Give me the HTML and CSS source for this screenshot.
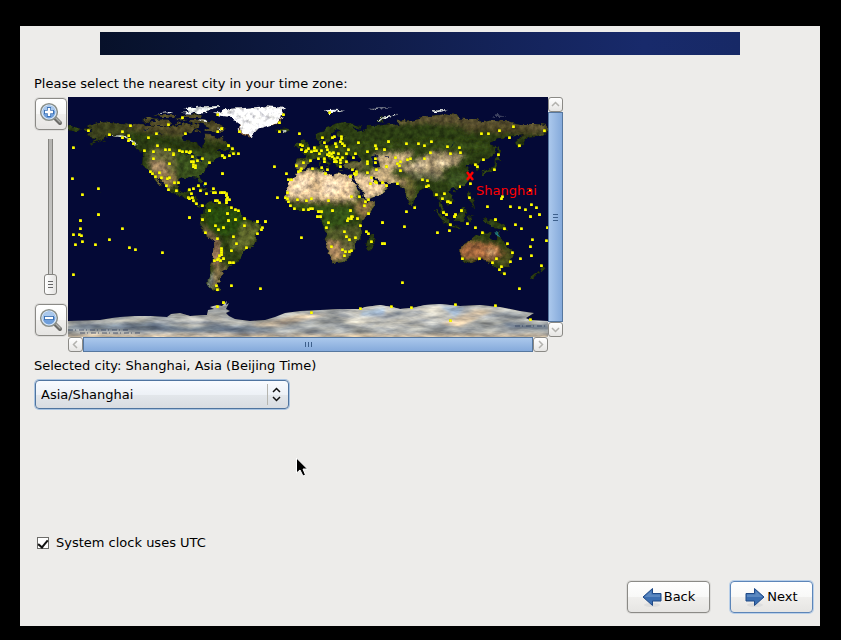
FILE: index.html
```html
<!DOCTYPE html>
<html lang="en">
<head>
<meta charset="utf-8">
<title>Time zone selection</title>
<link rel="stylesheet" href="styles.css">
</head>
<body>
<form class="installer">
  <div class="banner"></div>
  <main class="content">
    <h1 class="prompt">Please select the nearest city in your time zone:</h1>
    <div class="picker">
      <div class="zoom">
        <button type="button" class="button zoom-button" aria-label="Zoom in">
          <svg viewBox="0 0 24 24" width="24" height="24">
            <path d="M15 15l6 6" stroke="#6b6b68" stroke-width="4" stroke-linecap="round"/>
            <path d="M16 15l5 5" stroke="#aeb0ac" stroke-width="1.5" stroke-linecap="round"/>
            <circle cx="10" cy="10" r="8.3" fill="#6f9fdb" stroke="#8c9089" stroke-width="1.6"/>
            <circle cx="10" cy="10" r="7" fill="none" stroke="#dce8f4" stroke-width="1.2"/>
            <path d="M4 9a6 5.500 0 0 1 12 0q-6-1-12 3z" fill="#a9c8ec"/>
            <path d="M10 5v10M5 10h10" stroke="#3c72b5" stroke-width="4"/>
            <path d="M10 6v8M6 10h8" stroke="#fff" stroke-width="2.400"/>
          </svg>
        </button>
        <input class="zoom-slider" type="range" min="0" max="100" value="0" aria-label="Zoom level">
        <button type="button" class="button zoom-button" aria-label="Zoom out">
          <svg viewBox="0 0 24 24" width="24" height="24">
            <path d="M15 15l6 6" stroke="#6b6b68" stroke-width="4" stroke-linecap="round"/>
            <path d="M16 15l5 5" stroke="#aeb0ac" stroke-width="1.5" stroke-linecap="round"/>
            <circle cx="10" cy="10" r="8.300" fill="#6f9fdb" stroke="#8c9089" stroke-width="1.6"/>
            <circle cx="10" cy="10" r="7" fill="none" stroke="#dce8f4" stroke-width="1.2"/>
            <path d="M4 9a6 5.500 0 0 1 12 0q-6-1-12 3z" fill="#a9c8ec"/>
            <path d="M5 10h10" stroke="#3c72b5" stroke-width="4"/>
            <path d="M6 10h8" stroke="#fff" stroke-width="2.200"/>
          </svg>
        </button>
      </div>

      <svg class="map" viewBox="68 97 480 240" role="img" aria-label="World map with Shanghai selected">
        <defs>
          <!-- Coastlines as longitude / latitude pairs -->
          <clipPath id="land">
            <path d="M-168 66L-164 66.500-162 66-166 68.300-163 69.500-156 71.300-150 70.500-141 69.700-135 69-128 70-124 69.500-115 68.500-108 68-101 67.800-96 68-94 71.500-92 69.500-88 68.500-85 69.500-81.500 69-82 67-87 66-88 64-93 62-94.500 60-94.500 58.800-92.500 57-88 56.500-82.500 55.200-82 53-80 51.300-79 52-79 54.500-76.500 56.500-78.500 59-77.500 62.400-74 62.300-70 61-69.500 59-67 58.500-65 60.200-62 57-60 55-57 53.500-56 52-60 50.200-66 50.200-70 47.500-65 49-64.500 47-60 45.800-65.500 43.500-67 45-70 43.800-70.500 42-74 40.700-75.500 38.500-76 36-77 34.500-81 32-81.300 30-80 27-80.500 25.200-82 27-83 29.500-85 29.800-89 30.200-91 29.200-94 29.500-97 28-97.500 25-97.700 22-96 19-94.500 18.200-92 18.700-90.500 20-90 21.200-87 21.500-88 18-88.500 16-84 15.800-83.300 14-83.800 11-81.500 9-79.500 9.500-77.200 8.500-78 7.300-80.300 7.500-83 8.300-85.800 10.200-87.500 13-92 14.500-94.500 16.200-97 15.800-102 18-105.500 20-105.500 22.500-109 26-112.500 29.500-114.700 31.700-113 28.500-110 24-110 23-112 25-115 28-117 32.500-120.500 34.500-122.500 37.500-124.300 40.300-124 44-124.500 48.300-123 49-128 51-130.500 54.500-134 58-139 59.700-145 60.300-148 60.500-152 59.200-151 61-154 59-158 56.500-162 55-164 54.700-161 56-157.500 58.700-162 58.800-162 60-165.500 61.500-164.500 63-161 64.300-166 64.600Z"/>
            <path d="M-77.500 8.500L-75 11-72 12-71.500 10.500-68 11.500-62 10.700-60 8.500-55 6-51 4.500-50 1-48-1-44-2.500-39-3.500-35.300-5.500-35-9-38.500-13-39.300-18-41-22-45-23.300-48.500-26-49-28.500-52-33-55-34.900-58-34-57-36.500-62-39-65-41-63.700-42.500-65.500-45-67.500-46.500-66-48-69-51-68.300-52.500-65.300-54.700-69-55.300-73-53.500-75.500-50-75-46.500-73-42-73.500-38-71.500-33-71.500-30-70.300-24-70.300-18.400-76-14-79.500-8-81.200-5.500-80-3-81-1-80 1-77.500 2.700-77.500 6Z"/>
            <path d="M-6 35.800L-2 35.200 3 36.900 10 37.300 11 35 10.200 34 15 32.300 19 30.300 20 32.500 23 32.600 29 31 34 31.200 32.600 29.500 35.500 24 37.300 21 39 16 43 12 44 10.500 51 12 50.500 9 47 4 42-1 39.500-5 40.500-11 40.500-15 35-20 35.500-24 32.800-26 32-29 28-33 25.500-34 20-34.800 18.300-34 17.500-30.500 15-26.500 14.300-22 11.800-17.500 13.700-12 13-8.500 9-1 9.700 3.500 8.500 4.600 6 4.300 4 6.300-2 4.800-7.500 4.300-12 7.300-15 11-17 14.700-16 19-17 21.300-14.500 26-11.500 28.300-9.700 30-9.300 32.500Z"/>
            <path d="M49.300-12L50.300-15.500 47.500-24.500 45-25.500 43.500-22 44.500-16.500Z"/>
            <path d="M-9.300 38.700L-8.800 43.200-1.800 43.400-1.200 46-4.500 48.400-1.500 48.700-1 49.500 2 51 4.500 52.500 8.200 54 8.200 57 10.500 57.600 10 55 14 54 19 54.500 21 56.500 24 57.500 24 59.300 30 60 23 60 21.300 61 21.500 63.500 25.500 65 22 65.800 17.300 62 17 60.500 18.800 60 16.500 57 14.200 55.400 11.200 59 8 58 5.300 59 5 62 10 64 14 67.500 20 70 26 71 31 70.300 41 67.700 40 66.300 33 66.700 37 64 40 64.600 44 66 44 68.300 54 68.500 60 69.500 68 69 67 72 73 73 73 71 83 73.500 87 75.300 98 76.300 104 77.700 113 76 113 73.700 127 73.300 131 71 140 72.700 150 71.600 160 69.700 170 69.800 180 69 180 65 177 62.500 170 60 163.500 59.500 162 56 158 51.200 156.500 51 155.700 56 160 60.500 163 62.300 156 61.500 150 59.500 143 59.300 135.500 54.700 141 53 140 48 135 43.500 131 43 127.700 39.800 129.400 36 126.500 34.500 125 38 121.500 40.700 121.500 39 118 39 119 37.300 122.300 37 119.500 35 121.800 31.500 121.500 28.500 118 24.500 113.500 22.200 109.500 21.500 106 20 109 14 109 11.500 105 8.700 104.800 10.400 100.800 13.400 99.300 11 100.200 8 103.400 4.200 103.800 1.400 101 3 98.300 8 97.700 16 94.300 16 92 22 87 21.500 82 16.500 80.200 13 79.800 10.300 77.500 8.100 74.800 13 72.800 19.500 72.500 21.500 69 22.300 66.500 25.300 57.500 25.700 54 26.700 50 30 48 30 50 26.700 51.500 25.500 54 24.200 56.300 26 59.800 22.500 55.500 17.300 45 12.700 43 13.300 42.500 17 39 21.500 35 28 34.800 29.500 34.300 31.300 36 36.500 30.500 36.500 27.500 36.800 26.300 39.500 29 41 35 42 41.500 41.500 37 45.200 39.200 47.200 35 46.300 33.500 44.500 31 46.500 28 43.500 28.500 41.300 23.800 40.500 22.800 37 19.500 41 19.500 42 13.700 45.500 12.300 45.200 14 42.500 18.400 40 16.500 39 16 38 12 42 8.700 44.300 4 43.400 3 42-.2 39-2 36.800-5.500 36.100-8.800 37Z"/>
            <path d="M114-22L113.500-25.500 115.700-32 115.200-34.300 118-35 124-33.500 129-31.500 132-32 135.500-34.700 137.800-33 138.200-35.500 140-38 143.500-38.800 146.500-39 150-37.300 151.500-33 153.500-28.500 152.800-25 149-21 146-19 145.400-15 142.500-10.800 141.500-13 141-17.300 139.500-17.500 135.500-15 137-12.200 132.500-11.300 130-13.500 129-15 126-14 122.200-17.500Z"/>
            <!-- Islands -->
            <path d="M-5 50L1 51 1.500 53-2 56-2 57.500-4 58.500-6 57-4.500 54-3 53-5 52ZM-10 52L-6 52.300-6 55-8 55.200-10 54ZM-24 65.500L-22 64-18 63.500-14 65-16 66.500-20 66ZM130 31L132 31 132 33.500 136 33.700 140.500 35.500 142 39.500 141 41.500 145 43 142 45.500 140 43 140 38 136 36.500 131 34.200ZM142 46L144 49 143 54 142.200 53ZM95 5.500L98 4.500 104-1 106-3 105.500-6 102-4 98 1ZM105.500-6.500L108-6.500 114.500-7.500 114-8.500 106-7.500ZM109 1.500L113 3.500 117 7 119 5 117.500 1 116-4 110.500-3ZM119.500-5.500L120.500-3 119.500 0 121 1.200 125 1.500 121 .2 123.500-1 122-2 122.500-5 121-3 120.500-5.500ZM131-1L134-1 135-3.300 138-1.700 144-4 147.500-6.500 150.500-10.300 147-9.500 143-9 138-8 138-5.500 133-4ZM120 18.500L122 18.300 121.500 14.500 124 12.800 126 7 122.500 7.500 124 9 123 11 120.300 14ZM120.500 22L122 25 121 25.200ZM80 6.500L82 7 80.500 9.500ZM172.500-34.500L176-37.500 178.500-38 175-41.500 173.500-39.300 175-37.500ZM173-40.500L174-42 171-44.500 169-46.700 166.500-46 171-42.200ZM144.500-41L148-41 147-43.700ZM-84.500 22L-82 23.200-77 21.200-74.300 20.200-77.500 19.800ZM-74.200 18.500L-73 20-69 19.500-68.500 18.300-71.500 17.800ZM-78.200 18.300L-76.300 17.900ZM-67 18.400L-65.700 18.400-65.700 17.900-67 18ZM-59.300 47.800L-53 46.700-54 49.500-56 51.500ZM-128 50.800L-123.400 48.400-126 49ZM51.500 71.500L57 70.800 56 73 60 75.500 68 76.800 62 76.300 55 75ZM-180 69L-175 67.300-170 66-173 64.300-180 65ZM8.300 39L9.700 39 9.300 43 8.600 42ZM12.500 38L15.500 38.300 15 36.800ZM23.500 35.300H26.200V34.900H23.500ZM32.500 34.700L34.500 35.500 33.500 34.700ZM-156 19L-155 20-156 20ZM110 18.500L111 20 109 20ZM-155 57L-152 57.500-153.500 58Z"/>
            <!-- Canadian Arctic -->
            <path d="M-61.500 66L-67 63-72 64.500-78 64.500-73 67.500-79 70-88 71-89 73.500-80 73.700-72 71.500-66 69ZM-117 69L-105 68.800-102 70-105 73-116 73-113 71.500-118 71ZM-125 72L-119 71.500-115 73.300-120 74.500ZM-110 75L-100 75-98 76.500-108 76.500-116 76.300ZM-95 72.500L-90 73.500-96 74-102 73ZM-87 63.800L-81 63.800-84 66ZM-95 75L-80 75-80 76.500-90 77ZM-99 69.500L-96 70-98 71.500Z"/>
          </clipPath>
          <clipPath id="ice"><path d="M68 321L100 320 112 318 120 317 135 316 150 316 167 317 171 314 180 313 190 316 207 315 208 310 214 309 210 307 217 305 222 306 227 301 226 305 229 303 226 309 230 311 226 313 229 316 235 319 250 321 265 320 275 317 285 313 300 311 320 310 340 309 360 309 365 307 380 305 392 307 400 309 412 308 425 305 440 304 460 306 480 305 500 307 520 311 534 313 526 318 530 320 548 321V340H68Z"/></clipPath>
          <filter id="soft"><feGaussianBlur stdDeviation="1.600"/></filter>
          <filter id="terrain" filterUnits="userSpaceOnUse" x="68" y="97" width="480" height="240" color-interpolation-filters="sRGB">
            <feTurbulence type="fractalNoise" baseFrequency=".18" numOctaves="3" seed="4" result="rough"/>
            <feDisplacementMap in="SourceGraphic" in2="rough" scale="5" xChannelSelector="R" yChannelSelector="G" result="shape"/>
            <feTurbulence type="fractalNoise" baseFrequency=".2" numOctaves="3" seed="9"/>
            <feColorMatrix values="1.300 0 0 0 -.15 1.300 0 0 0 -.15 1.200 .1 0 0 -.15 0 0 0 0 1" result="grain"/>
            <feComposite in="shape" in2="grain" operator="arithmetic" k1=".7" k2=".65"/>
          </filter>
          <filter id="strata" filterUnits="userSpaceOnUse" x="68" y="297" width="480" height="42" color-interpolation-filters="sRGB">
            <feTurbulence type="fractalNoise" baseFrequency=".04 .16" numOctaves="4" seed="7"/>
            <feColorMatrix values="1.600 0 0 0 -.3 1.500 .1 0 0 -.3 1.300 .3 0 0 -.3 0 0 0 0 1" result="layers"/>
            <feComposite in="SourceGraphic" in2="layers" operator="arithmetic" k1=".6" k2=".7"/>
          </filter>
          <marker id="city" viewBox="0 0 8 8" markerWidth="8" markerHeight="8" markerUnits="userSpaceOnUse" refX="4" refY="4"><rect width="8" height="8" fill="#c8c800"/><rect x="1" y="1" width="7" height="7" fill="#ff0"/></marker>
        </defs>
        <rect x="68" y="97" width="480" height="240" fill="#040936"/>

        <g filter="url(#terrain)">
          <g transform="translate(308 217) scale(1.33333 -1.33333)">
            <g clip-path="url(#land)">
              <rect x="-180" y="-60" width="360" height="150" fill="#2b3d13"/>
              <g filter="url(#soft)">
                <path fill="#504a28" d="M-170 62L-140 66-120 63-95 60-78 58-60 56-60 80-170 80Z"/>
                <path fill="#3b3f1e" d="M-168 72L-140 71-128 66-140 60-160 58-170 60Z"/>
                <path fill="#253611" d="M-140 64L-110 59-95 52-65 48-60 55-80 54-97 57-120 62Z"/>
                <path fill="#626336" d="M-115 53L-100 49-98 34-102 28-118 34-120 47Z"/>
                <path fill="#a08460" d="M-119 42L-108 42-104 33-103 24-112 30-118 35Z"/>
                <path fill="#8b744a" d="M-115 32L-112 24-104 21-98 26-101 34Z"/>
                <path fill="#38501a" d="M-97 49L-68 47-76 35-82 25-97 29Z"/>
                <path fill="#284a0d" d="M-78 9L-50 5-48-8-60-14-74-13Z"/>
                <path fill="#5c652b" d="M-50-4L-36-5-40-20-50-28-60-20-52-12Z"/>
                <path fill="#927052" d="M-81-4L-74-11-67-17-65-28-67-38-72-36-72-20Z"/>
                <path fill="#7a6b43" d="M-70-36L-60-37-66-54-74-52Z"/>
                <path fill="#aeb8bb" d="M-73-43L-75-53-73-53-71-45Z"/>
                <path fill="#e4c49a" d="M-18 15L10 13 36 13 35 33-17 35Z"/>
                <path fill="#ffe3be" d="M-10 22L-2 20 2 28-6 29ZM10 18L22 17 27 27 12 28ZM-12 18L-5 18-4 21-14 21Z"/>
                <path fill="#c4a579" d="M2 21L12 20 8 27 3 27ZM-6 33L8 35 5 36-6 35Z"/>
                <path fill="#827244" d="M-18 14L38 12 38 10-16 11Z"/>
                <path fill="#315014" d="M-16 10L35 8 33-5 12-12 8 5Z"/>
                <path fill="#8b7144" d="M36 12L52 12 42-2 36 3Z"/>
                <path fill="#4d5527" d="M12-9L40-6 40-18 34-22 14-18Z"/>
                <path fill="#a8845c" d="M12-18L24-19 28-31 18-34Z"/>
                <path fill="#66643a" d="M27-18L36-22 28-34 24-33Z"/>
                <path fill="#e5c69c" d="M35 33L48 31 60 24 54 16 44 12 36 24Z"/>
                <path fill="#344816" d="M-5 50L20 52 60 56 100 58 134 56 134 50 85 53 45 50 5 44Z"/>
                <path fill="#787044" d="M-9 42L2 41-2 36-9 37ZM26 41L44 41 42 36 27 37Z"/>
                <path fill="#59502e" d="M60 69L95 70 110 68 180 62 180 80 60 80Z"/>
                <path fill="#464020" d="M115 64L175 61 160 68 120 68Z"/>
                <path fill="#c4aa7e" d="M44 35L62 37 67 26 58 24 50 29ZM48 47L80 49 75 42 64 36 55 36Z"/>
                <path fill="#a4916c" d="M66 36L94 49 118 47 112 39 100 36 102 30 82 29 72 34Z"/>
                <path fill="#e2cda6" d="M77 37L88 37 90 41 80 41ZM96 39L106 38 105 42 97 43Z"/>
                <path fill="#6c6a4e" d="M73 35L80 29 102 28 96 34Z"/>
                <path fill="#63602f" d="M70 30L80 29 80 16 76 10 72 20Z"/>
                <path fill="#a68b60" d="M66 30L74 28 72 22 67 25Z"/>
                <path fill="#3c5520" d="M104 32L121 33 118 23 106 21Z"/>
                <path fill="#a0663e" d="M113-23L122-18 132-19 142-21 147-28 140-33 125-32 114-31Z"/>
                <path fill="#d6a874" d="M135-24L141-25 139-29 135-29Z"/>
                <path fill="#46481f" d="M148-20L154-27 150-38 143-38 146-30Z"/>
              </g>
            </g>
            <path fill="#fff" d="M-73 78.300L-65 79-62 81-45 82-32 83-22 82.300-16 81.500-20 80-18 77-20 76-19 74-23 72.500-22 70.500-28 69-35 67-39 65-41 63-42 60-45 60.300-50 62.500-52 66-51 69-54 71-57 75-66 76Z"/>
            <path fill="none" stroke="#68492d" stroke-width="1" d="M-20 76L-22 70.500-28 69M-43 60L-50 62.500-51 69"/>
            <path fill="#eef3f3" d="M-93 81L-80 83-64 83-76 80-74 79-82 77-88 79ZM-115 77L-104 79-101 78ZM-95 78L-85 80-88 77.500ZM12 80L20 80.500 28 80 20 79 16 77ZM45 81L63 81.500 50 80.500ZM92 80L105 80 97 78.500 92 79.500ZM138 75.500L150 75.500 142 76ZM-83 73L-77 73-75 71-80 72ZM-68 67L-63 67-65 65.500Z"/>
            <path fill="none" stroke="#dfe5e6" stroke-width="1" d="M53 72L57 75 67 77M-146 61L-138 60.500-133 58-129 54M-19 64.500H-17"/>
            <path fill="#06103b" d="M49 46L47 44.500 49.500 40.500 49 37.500 54 37 53 41 51 44.500 53 46.500ZM-92 47L-88 48.500-85 46.500-87 42-88 43-86 46ZM-84 46L-80 45-82 43ZM-83 42L-79 43.200-78 44-80 42ZM32 1H34V-2H32ZM29-4L31-8.500 29.500-6ZM104 51.500L109 54 110 56 107 53ZM-124 66L-119 66.500-121 65ZM-116 62L-109 63-112 61.500ZM58 46L61 45 60 44Z"/>
            <path fill="none" stroke="#1c6670" stroke-width="1.500" d="M-78 25L-76 24M141-11L145-15"/>
          </g>
        </g>
        <g filter="url(#strata)">
          <g clip-path="url(#ice)">
            <rect x="68" y="297" width="480" height="42" fill="#a3a6a5"/>
            <g filter="url(#soft)">
              <path fill="#bdbdb8" d="M330 311L380 304 440 303 510 310 470 320 400 330 350 325ZM170 317L210 313 230 318 200 325Z"/>
              <path fill="#cdbba2" d="M440 324L475 310 493 311 460 327ZM250 325L300 315 330 314 280 326ZM68 334H548V339H68Z"/>
              <path fill="#6f7d8c" d="M68 326L150 322 190 328 210 325 290 328 240 333 68 329ZM390 311L405 310 398 314ZM500 323L548 325V330L510 327Z"/>
              <path fill="#a8bdd3" d="M362 311L385 307 384 315 360 316ZM440 306L465 307 455 317Z"/>
            </g>
          </g>
        </g>
        <path stroke="#263553" stroke-width="1" stroke-dasharray="5 2 1 3" stroke-opacity=".7" d="M68 330H130M80 333H140M515 326H545"/>

        <!-- City markers, one tile of the map per line group -->
        <g fill="none" marker-start="url(#city)">
          <polyline transform="translate(60 92) scale(.33333)" marker-mid="url(#city)" marker-end="url(#city)" points="40,167 85,116 148,128 187,119 187,137 211,101 206,131 209,141 205,146 220,155 265,137 289,125 325,98 367,77 376,125 473,68 473,119 485,110 292,161 253,176 280,179 280,200 316,173 328,173 340,185 340,188 358,176 367,179 379,179 388,182 391,179 397,194 328,215 394,209 400,209 412,206 427,200 448,212 400,218 406,221 406,227 400,224 487,191 493,197 505,161 271,239 277,245 286,254 298,242 304,257 322,260 328,257 319,281 325,293 349,296 343,272 355,272 388,293 400,290 394,305 415,281 436,275 421,296 439,305 460,290 460,302 466,302 385,317 388,320 397,317 400,326 409,335 427,341 487,245 37,260 67,308 115,290 115,368 61,386 388,377 427,383 448,356 466,326 472,326 478,332 481,302 487,302 493,302 499,305 499,311 502,317 499,323 499,332 502,365 505,386"/>
          <polyline transform="translate(220 92) scale(.33333)" marker-mid="url(#city)" marker-end="url(#city)" points="5,110 58,119 190,68 178,92 178,119 329,62 238,125 25,161 37,170 40,185 55,185 28,191 7,191 13,197 7,245 163,224 199,245 172,317 205,263 214,263 241,158 247,161 244,173 256,179 259,176 265,170 274,179 283,167 283,176 289,176 271,206 229,221 250,212 244,230 235,239 241,236 277,230 295,200 298,185 304,176 307,137 313,152 319,164 322,173 322,188 313,200 313,209 305,227 316,245 322,233 328,182 334,185 337,194 340,182 328,191 337,137 343,134 364,134 364,140 361,149 346,155 349,164 367,155 373,161 343,200 349,209 346,206 343,209 352,197 355,185 361,203 361,212 367,197 379,185 379,209 385,173 361,224 415,152 466,161 469,170 493,173 505,149 442,179 406,185 400,197 442,209 442,215 466,200 466,212 469,233 499,224 397,233 409,239 409,245 406,248 403,245 391,254 442,242 454,257 451,275 466,269 469,272 487,272 499,281 202,302 196,317 202,320 205,329 211,341 223,350 232,323 259,326 274,320 250,353 265,353 271,350 277,350 295,359 301,359 304,359 325,326 337,356 394,314 418,314 436,329 445,323 433,341 391,356 445,365 292,374 301,374 397,374 394,380 412,380 5,302 13,302 19,308 22,317 19,326 19,332 28,323 34,347 46,353 55,356 22,365 46,383 73,380 112,388 136,388"/>
          <polyline transform="translate(380 92) scale(.33333)" marker-mid="url(#city)" marker-end="url(#city)" points="25,149 13,173 79,155 115,155 133,161 154,149 151,182 133,200 202,164 238,167 241,182 211,185 304,125 325,125 358,116 400,104 388,137 418,161 493,116 355,188 310,203 343,233 286,218 292,224 46,197 82,203 91,200 52,215 61,209 58,221 61,236 19,224 7,272 19,281 52,275 127,263 142,266 139,284 145,281 240,284 271,275 268,317 169,308 193,305 187,320 202,329 205,329 211,332 104,347 79,359 190,362 199,368 226,368 223,374 244,356 322,344 364,320 367,314 391,344 418,347 436,353 454,338 469,347 478,368 451,374 346,383 451,296"/>
          <polyline transform="translate(60 210) scale(.33333)" marker-mid="url(#city)" marker-end="url(#city)" points="115,14 61,32 61,56 40,74 58,74 64,77 67,95 46,104 106,104 148,89 187,56 208,113 226,119 307,128 388,23 40,194 427,29 448,2 466,47 475,59 490,53 436,68 472,86 505,32 502,11 484,116 484,122 484,128 484,134 478,137 475,146 463,152 472,149 481,152 490,146 508,158 469,227 472,239 490,278 472,290"/>
          <polyline transform="translate(220 210) scale(.33333)" marker-mid="url(#city)" marker-end="url(#city)" points="22,11 25,32 46,29 10,53 73,26 73,47 112,35 136,35 127,53 124,59 112,71 40,80 49,101 79,113 34,122 4,116 4,122 4,128 4,134 1,152 10,146 31,158 40,158 34,227 121,236 10,278 244,83 292,20 301,20 295,5 304,5 325,38 319,53 337,2 391,2 394,20 385,26 382,32 412,26 445,11 421,47 373,65 379,80 388,89 406,83 439,65 445,71 454,95 334,110 367,119 376,125 388,125 394,122 373,137 487,38 487,101 493,101 421,296 274,308"/>
          <polyline transform="translate(380 210) scale(.33333)" marker-mid="url(#city)" marker-end="url(#city)" points="7,38 73,50 7,101 13,101 67,218 172,68 208,62 211,44 190,8 199,14 223,20 226,14 244,2 262,41 286,53 307,68 346,29 373,56 406,44 424,56 451,20 478,14 502,53 499,92 457,89 451,110 454,137 484,167 382,101 397,128 391,155 421,146 247,146 298,146 349,146 337,158 364,170 358,179 373,191 418,236 34,290 94,293 226,284 346,287 211,332 451,329"/>
        </g>
        <path d="M467 172l6 8M473 172l-6 8" stroke="red" stroke-width="2.400"/>
        <text class="map-label" x="476" y="195">Shanghai</text>
      </svg>

      <div class="scrollbar scrollbar-vertical">
        <button type="button" class="scroll-button" aria-label="Scroll up"><svg viewBox="0 0 9 9" width="9" height="9"><path d="M1 6l3.500-3.500L8 6"/></svg></button>
        <div class="scroll-thumb"><svg viewBox="0 0 7 7" width="7" height="7"><path d="M1 .5h5M1 3.500h5M1 6.500h5"/></svg></div>
        <button type="button" class="scroll-button" aria-label="Scroll down"><svg viewBox="0 0 9 9" width="9" height="9"><path d="M1 3l3.500 3.500L8 3"/></svg></button>
      </div>
      <div class="scrollbar scrollbar-horizontal">
        <button type="button" class="scroll-button" aria-label="Scroll left"><svg viewBox="0 0 9 9" width="9" height="9"><path d="M6 1L2.500 4.500 6 8"/></svg></button>
        <div class="scroll-thumb"><svg viewBox="0 0 7 7" width="7" height="7"><path d="M.5 1v5M3.500 1v5M6.500 1v5"/></svg></div>
        <button type="button" class="scroll-button" aria-label="Scroll right"><svg viewBox="0 0 9 9" width="9" height="9"><path d="M3 1l3.500 3.500L3 8"/></svg></button>
      </div>
    </div>

    <label class="selected-city" for="zone">Selected city: Shanghai, Asia (Beijing Time)</label>
    <div class="zone">
      <select id="zone"><option>Asia/Shanghai</option></select>
      <svg class="zone-arrows" viewBox="0 0 18 21" width="18" height="21"><path d="M.5 0v21" stroke="#b5b5b0"/><path d="M6 8l3.500-3.500L13 8M6 13l3.500 3.500L13 13" fill="none" stroke="#111" stroke-width="1.500"/></svg>
    </div>
    <label class="utc"><input type="checkbox" checked>System clock uses UTC</label>
  </main>
  <footer class="actions">
    <button type="button" class="button nav-button">
      <svg viewBox="0 0 20 20" width="20" height="20"><ellipse cx="10" cy="18" rx="8" ry="2" fill="#ddd"/><path d="M1 10L10.500 1.500V6.500H19V14H10.500V18.500Z" fill="#3b6eb0" stroke="#204a87"/><path d="M2.500 10L9.500 3.700V7.500H18V10Z" fill="#5b88c0"/></svg>Back</button>
    <button type="button" class="button nav-button nav-default">
      <svg viewBox="0 0 20 20" width="20" height="20"><ellipse cx="10" cy="18" rx="8" ry="2" fill="#ddd"/><path d="M19 10L9.500 1.500V6.500H1V14H9.500V18.500Z" fill="#3b6eb0" stroke="#204a87"/><path d="M17.500 10L10.500 3.700V7.500H2V10Z" fill="#5b88c0"/></svg>Next</button>
  </footer>
</form>
<svg class="pointer" viewBox="0 0 12 20" width="12" height="20"><path d="M.5 1V16L4 13 7 19 9.500 18 7 12H11.500Z" fill="#000" stroke="#fff"/></svg>
</body>
</html>
```

FILE: styles.css
```css
* { box-sizing: border-box; }

body {
  margin: 0;
  padding: 26px 21px 14px 20px;
  background: #000;
  color: #000;
  font: 13px/16px "DejaVu Sans", sans-serif;
}

button, select, input { margin: 0; font: inherit; color: inherit; }

.installer {
  display: flex;
  flex-direction: column;
  min-height: calc(100vh - 40px);
  background: #edecea;
}

.banner {
  width: 80%;
  height: 23px;
  margin: 6px auto 0;
  background: linear-gradient(90deg, #07112a, #101d4b 45%, #182a6b 85%, #172966);
}

.content {
  display: flex;
  flex-direction: column;
  align-items: flex-start;
  padding: 21px 14px 0;
}

.prompt { margin: 0 0 5px; font: inherit; }

.picker {
  display: grid;
  grid-template-columns: 34px minmax(0, 480px) 15px;
  width: 100%;
}

.map { display: block; width: 100%; }
.map-label { font-size: 13px; fill: red; }

.zoom {
  display: flex;
  flex-direction: column;
  align-items: center;
  padding: 1px 1px 1px 0;
}

.button {
  border: 1px solid #8b8a86;
  border-radius: 4px;
  background: linear-gradient(#fff, #f8f8f7 50%, #f0efed 50%, #e6e5e3);
  box-shadow: 0 0 0 1px #dddcda;
}

.zoom-button {
  display: grid;
  place-items: center;
  flex: none;
  width: 32px;
  height: 32px;
  padding: 0;
}

.zoom-slider {
  appearance: none;
  flex: 1;
  width: 13px;
  min-height: 0;
  margin: 9px 0;
  background: linear-gradient(#b5b4b1, #d4d4d2) center / 3px 100% no-repeat,
    linear-gradient(#858480, #858480) center / 5px 100% no-repeat;
  writing-mode: vertical-lr;
  direction: rtl;
}

.zoom-slider::-webkit-slider-thumb {
  appearance: none;
  width: 13px;
  height: 21px;
  border: 1px solid #858480;
  border-radius: 3px;
  background: repeating-linear-gradient(#666 0 1px, transparent 1px 3px) center / 5px 7px no-repeat,
    linear-gradient(90deg, #fff, #e4e3e1);
}

.scrollbar { display: flex; }
.scrollbar-vertical { flex-direction: column; }
.scrollbar-horizontal { grid-column: 2; height: 15px; }

.scroll-button {
  display: grid;
  place-items: center;
  flex: none;
  width: 15px;
  height: 15px;
  padding: 0;
  border: 1px solid #8b8a86;
  border-radius: 3px;
  background: linear-gradient(#fff, #e6e5e3);
}

.scroll-button path { fill: none; stroke: #b3b2ae; stroke-width: 1.5px; }

.scroll-thumb {
  display: grid;
  place-items: center;
  flex: 1;
  border: 1px solid #56779f;
  background: linear-gradient(90deg, #abc8ec, #85aadb);
}

.scrollbar-horizontal .scroll-thumb { background: linear-gradient(#abc8ec, #85aadb); }
.scroll-thumb path { fill: none; stroke: #3e608c; }

.selected-city { margin: 6px 0; }

.zone { position: relative; width: 254px; margin-left: 1px; }

.zone select {
  display: block;
  appearance: none;
  width: 100%;
  height: 29px;
  padding: 0 24px 0 5px;
  border: 1px solid #4f749f;
  border-radius: 4px;
  background: linear-gradient(#f8fbff, #edf1f6 50%, #e3e7eb 50%, #d8dce1);
  box-shadow: 0 0 0 1px #a9c4e2;
}

.zone-arrows { position: absolute; top: 4px; right: 4px; pointer-events: none; }

.utc { display: flex; align-items: center; gap: 7px; margin: 126px 0 0 3px; }

.utc input {
  display: grid;
  place-items: center;
  appearance: none;
  width: 12px;
  height: 12px;
  border: 1px solid #6d6c69;
  background: #fff;
}

.utc input:checked::before {
  content: "";
  width: 4px;
  height: 8px;
  border: solid #111;
  border-width: 0 2px 2px 0;
  transform: rotate(40deg);
}

.actions {
  display: flex;
  justify-content: flex-end;
  gap: 20px;
  margin-top: auto;
  padding: 12px 7px 13px;
}

.nav-button {
  display: flex;
  align-items: center;
  justify-content: center;
  gap: 2px;
  width: 83px;
  height: 32px;
  padding: 0;
}

.nav-default { border-color: #5c85b8; box-shadow: 0 0 0 1px #b9cfe8; }

.pointer { position: absolute; left: 296px; top: 457px; }
```
